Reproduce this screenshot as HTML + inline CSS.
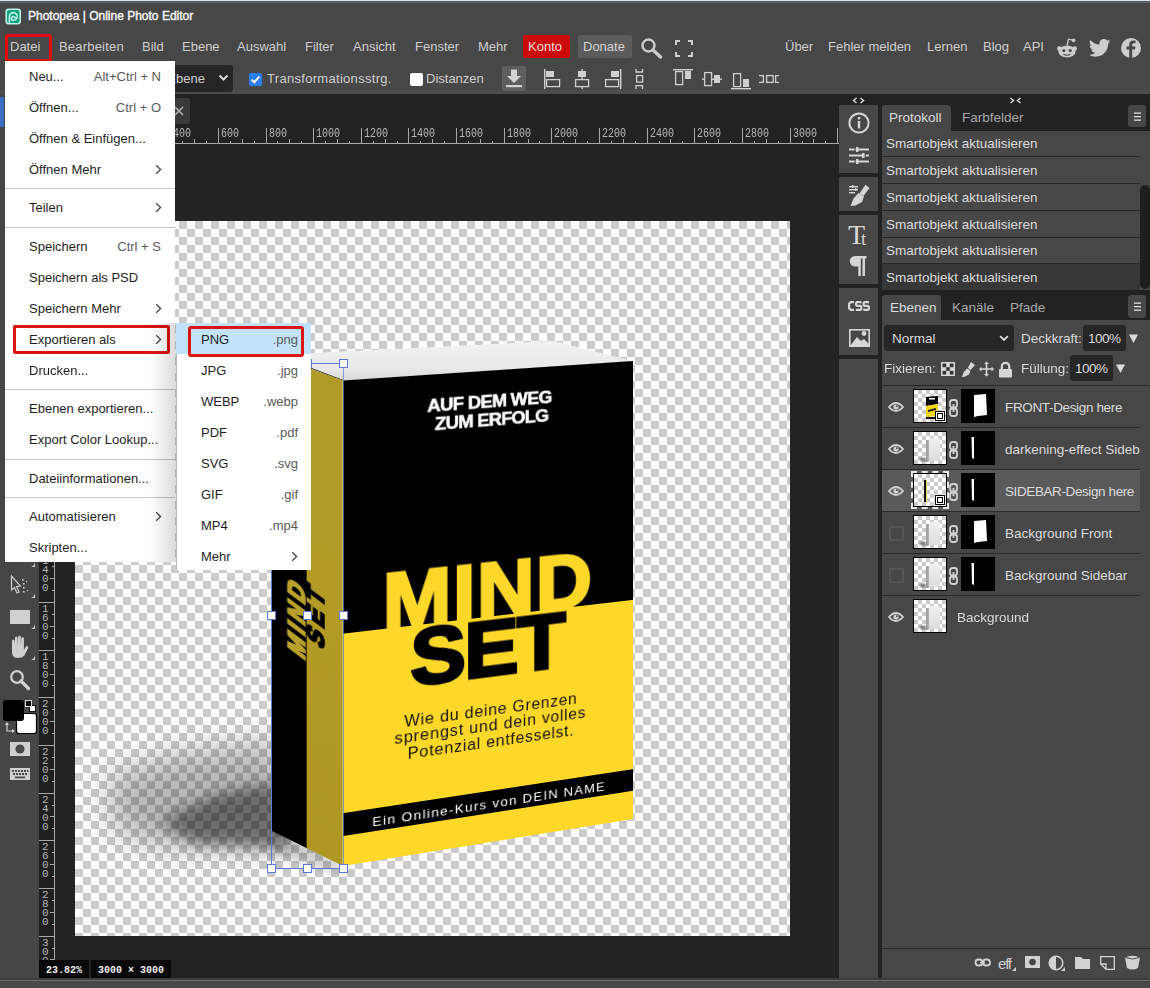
<!DOCTYPE html>
<html><head><meta charset="utf-8">
<style>
*{margin:0;padding:0;box-sizing:border-box}
html,body{width:1150px;height:988px;overflow:hidden;background:#474747;font-family:"Liberation Sans",sans-serif;font-size:13px;color:#cfcfcf}
.a{position:absolute}
.t{position:absolute;line-height:13px;white-space:nowrap}
.mono{font-family:"Liberation Mono",monospace}
.rl{font-size:10px;line-height:10px;color:#b8b8b8;transform:scaleY(1.2);transform-origin:0 100%}
.rv{font-size:11px;line-height:10px;color:#b4b4b4}
.mi{color:#1e1e1e}
.ms{color:#5a5a5a}
</style></head><body>
<!-- top border -->
<div class="a" style="left:0;top:0;width:1150px;height:1px;background:#dde2e8"></div>
<div class="a" style="left:0;top:1px;width:1150px;height:1px;background:#4d5156"></div>
<div class="a" style="left:0;top:2px;width:1150px;height:1px;background:#6b6f73"></div>
<div class="a" style="left:0;top:3px;width:1150px;height:1px;background:#43464a"></div>
<!-- dark work area -->
<div class="a" style="left:0;top:94px;width:1150px;height:884px;background:#222"></div>
<!-- bottom strip -->
<div class="a" style="left:0;top:978px;width:1150px;height:2px;background:#3c3c3c"></div>
<div class="a" style="left:0;top:980px;width:1150px;height:1px;background:#6e6e6e"></div>
<div class="a" style="left:0;top:981px;width:1150px;height:7px;background:#474747"></div>
<!-- left toolbar -->
<div class="a" style="left:0;top:94px;width:39px;height:884px;background:#464646"></div>
<div class="a" style="left:0;top:97px;width:4px;height:30px;background:#3a6fc4"></div>
<!-- canvas area -->
<div class="a" style="left:55px;top:144px;width:784px;height:834px;background:#232323"></div>
<div class="a" style="left:55px;top:125px;width:784px;height:19px;background:#222"></div>
<div class="a" style="left:39px;top:144px;width:16px;height:834px;background:#1f1f1f"></div>
<!-- doc tab -->
<div class="a" style="left:60px;top:98px;width:130px;height:26px;background:#3a3a3a;border-radius:3px"></div>
<svg class="a" style="left:173px;top:105px" width="12" height="12" viewBox="0 0 12 12"><path d="M2 2 L10 10 M10 2 L2 10" stroke="#b4b4b4" stroke-width="1.6"/></svg>
<!-- TITLE BAR -->
<svg class="a" style="left:5px;top:8px" width="17" height="17" viewBox="0 0 17 17">
<rect x="1.2" y="1.2" width="14" height="14.6" rx="2.5" fill="#16a07c" stroke="#b8f2ea" stroke-width="1.6"/>
<path d="M4.4 15.5 V8.5 A3.9 3.9 0 1 1 8.3 12.4 A1.9 1.9 0 1 1 10.2 10.5" fill="none" stroke="#b8f2ea" stroke-width="1.6"/>
</svg>
<div class="t" style="left:28px;top:10px;font-size:12px;color:#f0f0f0;-webkit-text-stroke:0.45px #f0f0f0">Photopea | Online Photo Editor</div>

<!-- MENU BAR -->
<div class="t" style="left:10px;top:40px">Datei</div>
<div class="a" style="left:5px;top:34px;width:47px;height:28px;border:3px solid #e00d0d;border-radius:3px"></div>
<div class="t" style="left:59px;top:40px;letter-spacing:0.2px">Bearbeiten</div>
<div class="t" style="left:142px;top:40px">Bild</div>
<div class="t" style="left:182px;top:40px">Ebene</div>
<div class="t" style="left:237px;top:40px">Auswahl</div>
<div class="t" style="left:305px;top:40px">Filter</div>
<div class="t" style="left:353px;top:40px">Ansicht</div>
<div class="t" style="left:415px;top:40px">Fenster</div>
<div class="t" style="left:478px;top:40px">Mehr</div>
<div class="a" style="left:523px;top:35px;width:47px;height:23px;background:#cc0a0a;border-radius:2px"></div>
<div class="t" style="left:528px;top:40px;color:#f6dede">Konto</div>
<div class="a" style="left:578px;top:35px;width:54px;height:23px;background:#5c5c5c;border-radius:2px"></div>
<div class="t" style="left:583px;top:40px;color:#d4d4d4">Donate</div>
<svg class="a" style="left:640px;top:37px" width="24" height="22" viewBox="0 0 24 22">
<circle cx="8.5" cy="8.5" r="6" fill="none" stroke="#cdcdcd" stroke-width="2.4"/>
<path d="M13 13 L20.5 20" stroke="#cdcdcd" stroke-width="3.4" stroke-linecap="round"/>
</svg>
<svg class="a" style="left:675px;top:40px" width="18" height="17" viewBox="0 0 18 17">
<path d="M1 5V1H5 M13 1H17V5 M17 12V16H13 M5 16H1V12" fill="none" stroke="#cdcdcd" stroke-width="2"/>
</svg>
<div class="t" style="left:785px;top:40px">Über</div>
<div class="t" style="left:828px;top:40px">Fehler melden</div>
<div class="t" style="left:927px;top:40px">Lernen</div>
<div class="t" style="left:983px;top:40px">Blog</div>
<div class="t" style="left:1023px;top:40px">API</div>
<!-- reddit -->
<svg class="a" style="left:1056px;top:37px" width="22" height="22" viewBox="0 0 22 22">
<ellipse cx="11" cy="14.5" rx="8.6" ry="6" fill="#cdcdcd"/>
<circle cx="3.2" cy="11.5" r="2.2" fill="#cdcdcd"/>
<circle cx="18.8" cy="11.5" r="2.2" fill="#cdcdcd"/>
<path d="M11 8.5 L12.5 2.2 L17 3.2" fill="none" stroke="#cdcdcd" stroke-width="1.3"/>
<circle cx="17.6" cy="3.4" r="1.8" fill="#cdcdcd"/>
<circle cx="7.8" cy="13.6" r="1.5" fill="#474747"/>
<circle cx="14.2" cy="13.6" r="1.5" fill="#474747"/>
<path d="M7.5 17.2 Q11 19.2 14.5 17.2" fill="none" stroke="#474747" stroke-width="1.1"/>
</svg>
<!-- twitter -->
<svg class="a" style="left:1089px;top:39px" width="22" height="18" viewBox="0 0 24 20">
<path fill="#cdcdcd" d="M23.6 2.4c-.9.4-1.8.6-2.8.8 1-.6 1.8-1.6 2.1-2.7-.9.6-2 1-3.1 1.2C18.9.7 17.6.1 16.2.1c-2.7 0-4.9 2.2-4.9 4.9 0 .4 0 .8.1 1.1C7.3 5.9 3.7 4 1.3 1 .9 1.7.6 2.6.6 3.5c0 1.7.9 3.2 2.2 4.1-.8 0-1.6-.2-2.2-.6v.1c0 2.4 1.7 4.4 3.9 4.8-.4.1-.8.2-1.3.2-.3 0-.6 0-.9-.1.6 2 2.4 3.4 4.6 3.4-1.7 1.3-3.8 2.1-6.1 2.1-.4 0-.8 0-1.2-.1 2.2 1.4 4.8 2.2 7.5 2.2 9.1 0 14-7.5 14-14v-.6c1-.7 1.8-1.6 2.5-2.6z"/>
</svg>
<!-- facebook -->
<svg class="a" style="left:1120px;top:37px" width="22" height="22" viewBox="0 0 22 22">
<circle cx="11" cy="11" r="10" fill="#cdcdcd"/>
<path d="M12.2 21.5 V12.6 H15 L15.4 9.6 H12.2 V7.8 C12.2 6.9 12.5 6.3 13.8 6.3 H15.5 V3.6 C15.2 3.6 14.2 3.5 13.2 3.5 C10.8 3.5 9.2 4.9 9.2 7.6 V9.6 H6.5 V12.6 H9.2 V21.5 Z" fill="#474747"/>
</svg>

<!-- TOOLBAR ROW -->
<div class="a" style="left:0;top:90px;width:1150px;height:4px;background:#4c4c4c"></div>
<div class="a" style="left:150px;top:65px;width:83px;height:27px;background:#262626;border-radius:3px"></div>
<div class="t" style="left:150px;top:72px;width:55px;text-align:right">Ebene</div>
<svg class="a" style="left:218px;top:74px" width="11" height="8" viewBox="0 0 11 8"><path d="M1.5 1.5 L5.5 5.5 L9.5 1.5" fill="none" stroke="#d8d8d8" stroke-width="2"/></svg>
<div class="a" style="left:249px;top:73px;width:13px;height:13px;background:#2a7ef2;border-radius:2px"></div>
<svg class="a" style="left:249px;top:73px" width="13" height="13" viewBox="0 0 13 13"><path d="M2.6 6.6 L5.2 9.2 L10.4 3.6" fill="none" stroke="#fff" stroke-width="2"/></svg>
<div class="t" style="left:267px;top:72px;letter-spacing:0.3px">Transformationsstrg.</div>
<div class="a" style="left:410px;top:73px;width:13px;height:13px;background:#fff;border-radius:2px"></div>
<div class="t" style="left:426px;top:72px">Distanzen</div>
<div class="a" style="left:502px;top:66px;width:24px;height:25px;background:#5e5e5e;border-radius:2px"></div>
<svg class="a" style="left:502px;top:66px" width="24" height="25" viewBox="0 0 24 25">
<path d="M9 3.5 H15 V10 H19 L12 17 L5 10 H9 Z" fill="#d2d2d2"/><rect x="4" y="19" width="16" height="2.2" fill="#d2d2d2"/>
</svg>


<!-- align icons -->
<svg class="a" style="left:530px;top:62px" width="260" height="32" viewBox="530 62 260 32">
<g fill="#d0d0d0">
<rect x="544" y="69" width="1.4" height="20"/><rect x="546" y="71" width="8" height="6"/>
<rect x="581.5" y="69" width="1.4" height="20"/><rect x="578" y="71" width="8" height="6"/>
<rect x="620" y="69" width="1.4" height="20"/><rect x="611" y="71" width="8" height="6"/>
<rect x="673" y="69" width="20" height="1.4"/><rect x="685" y="71" width="6" height="8"/>
<rect x="702" y="78.5" width="20" height="1.4"/><rect x="714" y="75" width="6" height="8"/>
<rect x="731" y="88" width="20" height="1.4"/><rect x="743" y="79" width="6" height="8"/>
</g>
<g fill="#474747" stroke="#d0d0d0" stroke-width="1.3">
<rect x="546.6" y="79.6" width="13" height="7"/>
<rect x="575.6" y="79.6" width="13" height="7"/>
<rect x="605.6" y="79.6" width="13" height="7"/>
<rect x="675.6" y="71.6" width="7" height="13"/>
<rect x="704.6" y="72.6" width="7" height="13"/>
<rect x="733.6" y="73.6" width="7" height="13"/>
</g>
<g fill="none" stroke="#d0d0d0" stroke-width="1.3">
<path d="M636 69 V72 H642.5 V69"/><rect x="636.6" y="75.6" width="6" height="6.5"/><path d="M636 89 V85.6 H642.5 V89"/>
<path d="M759 75.6 H763.4 V82.4 H759"/><rect x="766.6" y="75.6" width="6.5" height="6.8"/><path d="M779 75.6 H775.6 V82.4 H779"/>
</g>
</svg>
<!-- RULERS -->
<div class="a" style="left:55px;top:143px;width:784px;height:1px;background:#a8a8a8"></div>
<div class="a" style="left:63px;top:141px;width:1px;height:2px;background:#a8a8a8"></div>
<div class="a" style="left:75px;top:128px;width:1px;height:15px;background:#a8a8a8"></div>
<div class="t mono rl" style="left:78px;top:131px">0</div>
<div class="a" style="left:87px;top:141px;width:1px;height:2px;background:#a8a8a8"></div>
<div class="a" style="left:99px;top:139px;width:1px;height:4px;background:#a8a8a8"></div>
<div class="a" style="left:111px;top:141px;width:1px;height:2px;background:#a8a8a8"></div>
<div class="a" style="left:123px;top:128px;width:1px;height:15px;background:#a8a8a8"></div>
<div class="t mono rl" style="left:126px;top:131px">200</div>
<div class="a" style="left:135px;top:141px;width:1px;height:2px;background:#a8a8a8"></div>
<div class="a" style="left:146px;top:139px;width:1px;height:4px;background:#a8a8a8"></div>
<div class="a" style="left:158px;top:141px;width:1px;height:2px;background:#a8a8a8"></div>
<div class="a" style="left:170px;top:128px;width:1px;height:15px;background:#a8a8a8"></div>
<div class="t mono rl" style="left:173px;top:131px">400</div>
<div class="a" style="left:182px;top:141px;width:1px;height:2px;background:#a8a8a8"></div>
<div class="a" style="left:194px;top:139px;width:1px;height:4px;background:#a8a8a8"></div>
<div class="a" style="left:206px;top:141px;width:1px;height:2px;background:#a8a8a8"></div>
<div class="a" style="left:218px;top:128px;width:1px;height:15px;background:#a8a8a8"></div>
<div class="t mono rl" style="left:221px;top:131px">600</div>
<div class="a" style="left:230px;top:141px;width:1px;height:2px;background:#a8a8a8"></div>
<div class="a" style="left:242px;top:139px;width:1px;height:4px;background:#a8a8a8"></div>
<div class="a" style="left:254px;top:141px;width:1px;height:2px;background:#a8a8a8"></div>
<div class="a" style="left:266px;top:128px;width:1px;height:15px;background:#a8a8a8"></div>
<div class="t mono rl" style="left:269px;top:131px">800</div>
<div class="a" style="left:277px;top:141px;width:1px;height:2px;background:#a8a8a8"></div>
<div class="a" style="left:289px;top:139px;width:1px;height:4px;background:#a8a8a8"></div>
<div class="a" style="left:301px;top:141px;width:1px;height:2px;background:#a8a8a8"></div>
<div class="a" style="left:313px;top:128px;width:1px;height:15px;background:#a8a8a8"></div>
<div class="t mono rl" style="left:316px;top:131px">1000</div>
<div class="a" style="left:325px;top:141px;width:1px;height:2px;background:#a8a8a8"></div>
<div class="a" style="left:337px;top:139px;width:1px;height:4px;background:#a8a8a8"></div>
<div class="a" style="left:349px;top:141px;width:1px;height:2px;background:#a8a8a8"></div>
<div class="a" style="left:361px;top:128px;width:1px;height:15px;background:#a8a8a8"></div>
<div class="t mono rl" style="left:364px;top:131px">1200</div>
<div class="a" style="left:373px;top:141px;width:1px;height:2px;background:#a8a8a8"></div>
<div class="a" style="left:385px;top:139px;width:1px;height:4px;background:#a8a8a8"></div>
<div class="a" style="left:397px;top:141px;width:1px;height:2px;background:#a8a8a8"></div>
<div class="a" style="left:408px;top:128px;width:1px;height:15px;background:#a8a8a8"></div>
<div class="t mono rl" style="left:411px;top:131px">1400</div>
<div class="a" style="left:420px;top:141px;width:1px;height:2px;background:#a8a8a8"></div>
<div class="a" style="left:432px;top:139px;width:1px;height:4px;background:#a8a8a8"></div>
<div class="a" style="left:444px;top:141px;width:1px;height:2px;background:#a8a8a8"></div>
<div class="a" style="left:456px;top:128px;width:1px;height:15px;background:#a8a8a8"></div>
<div class="t mono rl" style="left:459px;top:131px">1600</div>
<div class="a" style="left:468px;top:141px;width:1px;height:2px;background:#a8a8a8"></div>
<div class="a" style="left:480px;top:139px;width:1px;height:4px;background:#a8a8a8"></div>
<div class="a" style="left:492px;top:141px;width:1px;height:2px;background:#a8a8a8"></div>
<div class="a" style="left:504px;top:128px;width:1px;height:15px;background:#a8a8a8"></div>
<div class="t mono rl" style="left:507px;top:131px">1800</div>
<div class="a" style="left:516px;top:141px;width:1px;height:2px;background:#a8a8a8"></div>
<div class="a" style="left:528px;top:139px;width:1px;height:4px;background:#a8a8a8"></div>
<div class="a" style="left:539px;top:141px;width:1px;height:2px;background:#a8a8a8"></div>
<div class="a" style="left:551px;top:128px;width:1px;height:15px;background:#a8a8a8"></div>
<div class="t mono rl" style="left:554px;top:131px">2000</div>
<div class="a" style="left:563px;top:141px;width:1px;height:2px;background:#a8a8a8"></div>
<div class="a" style="left:575px;top:139px;width:1px;height:4px;background:#a8a8a8"></div>
<div class="a" style="left:587px;top:141px;width:1px;height:2px;background:#a8a8a8"></div>
<div class="a" style="left:599px;top:128px;width:1px;height:15px;background:#a8a8a8"></div>
<div class="t mono rl" style="left:602px;top:131px">2200</div>
<div class="a" style="left:611px;top:141px;width:1px;height:2px;background:#a8a8a8"></div>
<div class="a" style="left:623px;top:139px;width:1px;height:4px;background:#a8a8a8"></div>
<div class="a" style="left:635px;top:141px;width:1px;height:2px;background:#a8a8a8"></div>
<div class="a" style="left:647px;top:128px;width:1px;height:15px;background:#a8a8a8"></div>
<div class="t mono rl" style="left:650px;top:131px">2400</div>
<div class="a" style="left:659px;top:141px;width:1px;height:2px;background:#a8a8a8"></div>
<div class="a" style="left:670px;top:139px;width:1px;height:4px;background:#a8a8a8"></div>
<div class="a" style="left:682px;top:141px;width:1px;height:2px;background:#a8a8a8"></div>
<div class="a" style="left:694px;top:128px;width:1px;height:15px;background:#a8a8a8"></div>
<div class="t mono rl" style="left:697px;top:131px">2600</div>
<div class="a" style="left:706px;top:141px;width:1px;height:2px;background:#a8a8a8"></div>
<div class="a" style="left:718px;top:139px;width:1px;height:4px;background:#a8a8a8"></div>
<div class="a" style="left:730px;top:141px;width:1px;height:2px;background:#a8a8a8"></div>
<div class="a" style="left:742px;top:128px;width:1px;height:15px;background:#a8a8a8"></div>
<div class="t mono rl" style="left:745px;top:131px">2800</div>
<div class="a" style="left:754px;top:141px;width:1px;height:2px;background:#a8a8a8"></div>
<div class="a" style="left:766px;top:139px;width:1px;height:4px;background:#a8a8a8"></div>
<div class="a" style="left:778px;top:141px;width:1px;height:2px;background:#a8a8a8"></div>
<div class="a" style="left:790px;top:128px;width:1px;height:15px;background:#a8a8a8"></div>
<div class="t mono rl" style="left:793px;top:131px">3000</div>
<div class="a" style="left:802px;top:141px;width:1px;height:2px;background:#a8a8a8"></div>
<div class="a" style="left:813px;top:139px;width:1px;height:4px;background:#a8a8a8"></div>
<div class="a" style="left:825px;top:141px;width:1px;height:2px;background:#a8a8a8"></div>
<div class="a" style="left:837px;top:128px;width:1px;height:15px;background:#a8a8a8"></div>
<div class="t mono rl" style="left:840px;top:131px">3200</div>
<div class="a" style="left:54px;top:144px;width:1px;height:834px;background:#a8a8a8"></div>
<div class="a" style="left:52px;top:209px;width:2px;height:1px;background:#a8a8a8"></div>
<div class="a" style="left:39px;top:221px;width:15px;height:1px;background:#a8a8a8"></div>
<div class="t mono rv" style="left:42px;top:223px">0</div>
<div class="a" style="left:52px;top:233px;width:2px;height:1px;background:#a8a8a8"></div>
<div class="a" style="left:50px;top:245px;width:4px;height:1px;background:#a8a8a8"></div>
<div class="a" style="left:52px;top:257px;width:2px;height:1px;background:#a8a8a8"></div>
<div class="a" style="left:39px;top:269px;width:15px;height:1px;background:#a8a8a8"></div>
<div class="t mono rv" style="left:42px;top:271px">2</div>
<div class="t mono rv" style="left:42px;top:280px">0</div>
<div class="t mono rv" style="left:42px;top:289px">0</div>
<div class="a" style="left:52px;top:281px;width:2px;height:1px;background:#a8a8a8"></div>
<div class="a" style="left:50px;top:292px;width:4px;height:1px;background:#a8a8a8"></div>
<div class="a" style="left:52px;top:304px;width:2px;height:1px;background:#a8a8a8"></div>
<div class="a" style="left:39px;top:316px;width:15px;height:1px;background:#a8a8a8"></div>
<div class="t mono rv" style="left:42px;top:318px">4</div>
<div class="t mono rv" style="left:42px;top:327px">0</div>
<div class="t mono rv" style="left:42px;top:336px">0</div>
<div class="a" style="left:52px;top:328px;width:2px;height:1px;background:#a8a8a8"></div>
<div class="a" style="left:50px;top:340px;width:4px;height:1px;background:#a8a8a8"></div>
<div class="a" style="left:52px;top:352px;width:2px;height:1px;background:#a8a8a8"></div>
<div class="a" style="left:39px;top:364px;width:15px;height:1px;background:#a8a8a8"></div>
<div class="t mono rv" style="left:42px;top:366px">6</div>
<div class="t mono rv" style="left:42px;top:375px">0</div>
<div class="t mono rv" style="left:42px;top:384px">0</div>
<div class="a" style="left:52px;top:376px;width:2px;height:1px;background:#a8a8a8"></div>
<div class="a" style="left:50px;top:388px;width:4px;height:1px;background:#a8a8a8"></div>
<div class="a" style="left:52px;top:400px;width:2px;height:1px;background:#a8a8a8"></div>
<div class="a" style="left:39px;top:412px;width:15px;height:1px;background:#a8a8a8"></div>
<div class="t mono rv" style="left:42px;top:414px">8</div>
<div class="t mono rv" style="left:42px;top:423px">0</div>
<div class="t mono rv" style="left:42px;top:432px">0</div>
<div class="a" style="left:52px;top:423px;width:2px;height:1px;background:#a8a8a8"></div>
<div class="a" style="left:50px;top:435px;width:4px;height:1px;background:#a8a8a8"></div>
<div class="a" style="left:52px;top:447px;width:2px;height:1px;background:#a8a8a8"></div>
<div class="a" style="left:39px;top:459px;width:15px;height:1px;background:#a8a8a8"></div>
<div class="t mono rv" style="left:42px;top:461px">1</div>
<div class="t mono rv" style="left:42px;top:470px">0</div>
<div class="t mono rv" style="left:42px;top:479px">0</div>
<div class="t mono rv" style="left:42px;top:488px">0</div>
<div class="a" style="left:52px;top:471px;width:2px;height:1px;background:#a8a8a8"></div>
<div class="a" style="left:50px;top:483px;width:4px;height:1px;background:#a8a8a8"></div>
<div class="a" style="left:52px;top:495px;width:2px;height:1px;background:#a8a8a8"></div>
<div class="a" style="left:39px;top:507px;width:15px;height:1px;background:#a8a8a8"></div>
<div class="t mono rv" style="left:42px;top:509px">1</div>
<div class="t mono rv" style="left:42px;top:518px">2</div>
<div class="t mono rv" style="left:42px;top:527px">0</div>
<div class="t mono rv" style="left:42px;top:536px">0</div>
<div class="a" style="left:52px;top:519px;width:2px;height:1px;background:#a8a8a8"></div>
<div class="a" style="left:50px;top:531px;width:4px;height:1px;background:#a8a8a8"></div>
<div class="a" style="left:52px;top:543px;width:2px;height:1px;background:#a8a8a8"></div>
<div class="a" style="left:39px;top:554px;width:15px;height:1px;background:#a8a8a8"></div>
<div class="t mono rv" style="left:42px;top:556px">1</div>
<div class="t mono rv" style="left:42px;top:565px">4</div>
<div class="t mono rv" style="left:42px;top:574px">0</div>
<div class="t mono rv" style="left:42px;top:583px">0</div>
<div class="a" style="left:52px;top:566px;width:2px;height:1px;background:#a8a8a8"></div>
<div class="a" style="left:50px;top:578px;width:4px;height:1px;background:#a8a8a8"></div>
<div class="a" style="left:52px;top:590px;width:2px;height:1px;background:#a8a8a8"></div>
<div class="a" style="left:39px;top:602px;width:15px;height:1px;background:#a8a8a8"></div>
<div class="t mono rv" style="left:42px;top:604px">1</div>
<div class="t mono rv" style="left:42px;top:613px">6</div>
<div class="t mono rv" style="left:42px;top:622px">0</div>
<div class="t mono rv" style="left:42px;top:631px">0</div>
<div class="a" style="left:52px;top:614px;width:2px;height:1px;background:#a8a8a8"></div>
<div class="a" style="left:50px;top:626px;width:4px;height:1px;background:#a8a8a8"></div>
<div class="a" style="left:52px;top:638px;width:2px;height:1px;background:#a8a8a8"></div>
<div class="a" style="left:39px;top:650px;width:15px;height:1px;background:#a8a8a8"></div>
<div class="t mono rv" style="left:42px;top:652px">1</div>
<div class="t mono rv" style="left:42px;top:661px">8</div>
<div class="t mono rv" style="left:42px;top:670px">0</div>
<div class="t mono rv" style="left:42px;top:679px">0</div>
<div class="a" style="left:52px;top:662px;width:2px;height:1px;background:#a8a8a8"></div>
<div class="a" style="left:50px;top:674px;width:4px;height:1px;background:#a8a8a8"></div>
<div class="a" style="left:52px;top:685px;width:2px;height:1px;background:#a8a8a8"></div>
<div class="a" style="left:39px;top:697px;width:15px;height:1px;background:#a8a8a8"></div>
<div class="t mono rv" style="left:42px;top:699px">2</div>
<div class="t mono rv" style="left:42px;top:708px">0</div>
<div class="t mono rv" style="left:42px;top:717px">0</div>
<div class="t mono rv" style="left:42px;top:726px">0</div>
<div class="a" style="left:52px;top:709px;width:2px;height:1px;background:#a8a8a8"></div>
<div class="a" style="left:50px;top:721px;width:4px;height:1px;background:#a8a8a8"></div>
<div class="a" style="left:52px;top:733px;width:2px;height:1px;background:#a8a8a8"></div>
<div class="a" style="left:39px;top:745px;width:15px;height:1px;background:#a8a8a8"></div>
<div class="t mono rv" style="left:42px;top:747px">2</div>
<div class="t mono rv" style="left:42px;top:756px">2</div>
<div class="t mono rv" style="left:42px;top:765px">0</div>
<div class="t mono rv" style="left:42px;top:774px">0</div>
<div class="a" style="left:52px;top:757px;width:2px;height:1px;background:#a8a8a8"></div>
<div class="a" style="left:50px;top:769px;width:4px;height:1px;background:#a8a8a8"></div>
<div class="a" style="left:52px;top:781px;width:2px;height:1px;background:#a8a8a8"></div>
<div class="a" style="left:39px;top:793px;width:15px;height:1px;background:#a8a8a8"></div>
<div class="t mono rv" style="left:42px;top:795px">2</div>
<div class="t mono rv" style="left:42px;top:804px">4</div>
<div class="t mono rv" style="left:42px;top:813px">0</div>
<div class="t mono rv" style="left:42px;top:822px">0</div>
<div class="a" style="left:52px;top:805px;width:2px;height:1px;background:#a8a8a8"></div>
<div class="a" style="left:50px;top:816px;width:4px;height:1px;background:#a8a8a8"></div>
<div class="a" style="left:52px;top:828px;width:2px;height:1px;background:#a8a8a8"></div>
<div class="a" style="left:39px;top:840px;width:15px;height:1px;background:#a8a8a8"></div>
<div class="t mono rv" style="left:42px;top:842px">2</div>
<div class="t mono rv" style="left:42px;top:851px">6</div>
<div class="t mono rv" style="left:42px;top:860px">0</div>
<div class="t mono rv" style="left:42px;top:869px">0</div>
<div class="a" style="left:52px;top:852px;width:2px;height:1px;background:#a8a8a8"></div>
<div class="a" style="left:50px;top:864px;width:4px;height:1px;background:#a8a8a8"></div>
<div class="a" style="left:52px;top:876px;width:2px;height:1px;background:#a8a8a8"></div>
<div class="a" style="left:39px;top:888px;width:15px;height:1px;background:#a8a8a8"></div>
<div class="t mono rv" style="left:42px;top:890px">2</div>
<div class="t mono rv" style="left:42px;top:899px">8</div>
<div class="t mono rv" style="left:42px;top:908px">0</div>
<div class="t mono rv" style="left:42px;top:917px">0</div>
<div class="a" style="left:52px;top:900px;width:2px;height:1px;background:#a8a8a8"></div>
<div class="a" style="left:50px;top:912px;width:4px;height:1px;background:#a8a8a8"></div>
<div class="a" style="left:52px;top:924px;width:2px;height:1px;background:#a8a8a8"></div>
<div class="a" style="left:39px;top:936px;width:15px;height:1px;background:#a8a8a8"></div>
<div class="t mono rv" style="left:42px;top:938px">3</div>
<div class="t mono rv" style="left:42px;top:947px">0</div>
<div class="t mono rv" style="left:42px;top:956px">0</div>
<div class="t mono rv" style="left:42px;top:965px">0</div>
<div class="a" style="left:52px;top:948px;width:2px;height:1px;background:#a8a8a8"></div>
<div class="a" style="left:50px;top:959px;width:4px;height:1px;background:#a8a8a8"></div>
<div class="a" style="left:52px;top:971px;width:2px;height:1px;background:#a8a8a8"></div>
<!-- canvas -->
<div class="a" style="left:75px;top:221px;width:715px;height:715px;background:conic-gradient(#ccc 25%,#fff 0 50%,#ccc 0 75%,#fff 0);background-size:16px 16px"></div>
<!-- BOOK -->
<svg class="a" style="left:0;top:0" width="1150" height="988"><defs><filter id="sb" x="-50%" y="-50%" width="200%" height="200%"><feGaussianBlur stdDeviation="16"/></filter><filter id="sb2" x="-50%" y="-50%" width="200%" height="200%"><feGaussianBlur stdDeviation="7"/></filter></defs><path d="M285 738 L180 752 L108 775 L112 830 L160 848 L285 850 Z" fill="#000" opacity="0.27" filter="url(#sb)"/><path d="M285 780 L215 795 L160 822 L195 844 L285 848 Z" fill="#000" opacity="0.42" filter="url(#sb2)"/><path d="M272 828 L343 864 L343 874 L272 850 Z" fill="#000" opacity="0.25" filter="url(#sb2)"/></svg>
<svg class="a" style="left:0;top:0" width="1150" height="988"><defs><linearGradient id="tg" x1="0" y1="0" x2="0" y2="1"><stop offset="0" stop-color="#f2f2f2"/><stop offset="0.7" stop-color="#e8e8e8"/><stop offset="1" stop-color="#d8d8d8"/></linearGradient></defs><path d="M272 355 L553 341 L633 361 L343 380.4 Z" fill="url(#tg)"/><path d="M300 364 L343 380.4" stroke="#333" stroke-width="1"/></svg>
<div class="a" style="left:0;top:0;width:71px;height:486px;transform-origin:0 0;transform:matrix3d(0.90449451,0.25182727,0,-0.00027844165,0,0.97942387,0,0,0,0,1,0,272,355,0,1);overflow:hidden;background:linear-gradient(180deg,#b09a2a 0%,#b39b26 40%,#b09724 100%)"><div class="a" style="left:0;top:0;width:35px;height:486px;background:#000"></div><div class="a" style="left:70px;top:0;width:1px;height:486px;background:#c8b860"></div><div class="a" style="left:0;top:0;width:300px;height:40px;transform-origin:0 0;transform:translate(13px,299px) rotate(-90deg)"><div class="t" style="left:0;top:0;font-size:24px;line-height:24px;font-weight:bold;color:#b9a02c;letter-spacing:4px;-webkit-text-stroke:2.2px #b9a02c;transform:skewX(-18deg);transform-origin:0 100%">MIND</div></div><div class="a" style="left:0;top:0;width:300px;height:40px;transform-origin:0 0;transform:translate(32px,280px) rotate(-90deg)"><div class="t" style="left:0;top:0;font-size:24px;line-height:24px;font-weight:bold;color:#000;letter-spacing:5px;-webkit-text-stroke:2px #000;transform:skewX(-18deg);transform-origin:0 100%">SET</div></div></div>
<div class="a" style="left:0;top:0;width:290px;height:487px;transform-origin:0 0;transform:matrix3d(1.1315374,0.0081192591,0,0.00020780003,0,0.99712526,0,0,0,0,1,0,343,380.4,0,1);overflow:hidden;background:#000"><div class="a" style="left:0;top:254px;width:290px;height:233px;background:#fdd829"></div><div class="a" style="left:0;top:434px;width:290px;height:23px;background:#000"></div><div class="t" style="left:-157px;width:600px;text-align:center;top:22.5px;font-size:18.3px;line-height:18.3px;font-weight:bold;color:#fff;letter-spacing:-0.7px;-webkit-text-stroke:0.5px #fff">AUF DEM WEG</div>
<div class="t" style="left:-155px;width:600px;text-align:center;top:41.5px;font-size:18.3px;line-height:18.3px;font-weight:bold;color:#fff;letter-spacing:-0.75px;-webkit-text-stroke:0.5px #fff">ZUM ERFOLG</div>
<div class="t" style="left:-157px;width:600px;text-align:center;top:187.3px;font-size:80px;line-height:80px;font-weight:bold;color:#fdd829;letter-spacing:1.5px;-webkit-text-stroke:3px #fdd829">MIND</div>
<div class="t" style="left:-159px;width:600px;text-align:center;top:246.1px;font-size:82px;line-height:82px;font-weight:bold;color:#000;letter-spacing:-2px;-webkit-text-stroke:3px #000">SET</div>
<div class="t" style="left:-155px;width:600px;text-align:center;top:342.5px;font-size:16px;line-height:16px;font-weight:normal;color:#111;letter-spacing:0.7px;">Wie du deine Grenzen</div>
<div class="t" style="left:-155px;width:600px;text-align:center;top:359.0px;font-size:16px;line-height:16px;font-weight:normal;color:#111;letter-spacing:0.8px;">sprengst und dein volles</div>
<div class="t" style="left:-155px;width:600px;text-align:center;top:375.5px;font-size:16px;line-height:16px;font-weight:normal;color:#111;letter-spacing:0.7px;">Potenzial entfesselst.</div>
<div class="t" style="left:-155.5px;width:600px;text-align:center;top:440.7px;font-size:13.4px;line-height:13.4px;font-weight:normal;color:#fff;letter-spacing:1.25px;">Ein Online-Kurs von DEIN NAME</div>
</div>
<div class="a" style="left:271px;top:363px;width:1px;height:505px;background:#5b7ad6"></div>
<div class="a" style="left:343px;top:363px;width:1px;height:505px;background:#5b7ad6;opacity:0.7"></div>
<div class="a" style="left:271px;top:363px;width:72px;height:1px;background:#5b7ad6"></div>
<div class="a" style="left:271px;top:868px;width:72px;height:1px;background:#5b7ad6"></div>
<div class="a" style="left:267px;top:359px;width:9px;height:9px;background:#fff;border:1px solid #5b7ad6"></div>
<div class="a" style="left:303px;top:359px;width:9px;height:9px;background:#fff;border:1px solid #5b7ad6"></div>
<div class="a" style="left:339px;top:359px;width:9px;height:9px;background:#fff;border:1px solid #5b7ad6"></div>
<div class="a" style="left:267px;top:611px;width:9px;height:9px;background:#fff;border:1px solid #5b7ad6"></div>
<div class="a" style="left:303px;top:611px;width:9px;height:9px;background:#fff;border:1px solid #5b7ad6"></div>
<div class="a" style="left:339px;top:611px;width:9px;height:9px;background:#fff;border:1px solid #5b7ad6"></div>
<div class="a" style="left:267px;top:864px;width:9px;height:9px;background:#fff;border:1px solid #5b7ad6"></div>
<div class="a" style="left:303px;top:864px;width:9px;height:9px;background:#fff;border:1px solid #5b7ad6"></div>
<div class="a" style="left:339px;top:864px;width:9px;height:9px;background:#fff;border:1px solid #5b7ad6"></div>
<!-- LEFT TOOLBAR ICONS -->
<svg class="a" style="left:0;top:560px" width="39" height="240" viewBox="0 560 39 240">
<g fill="#d0d0d0">
<!-- corner marks -->
<path d="M35 562 Q34 567 30 567 L35 567 Z"/>
<path d="M35 593 Q34 598 30 598 L35 598 Z"/>
<path d="M35 624 Q34 629 30 629 L35 629 Z"/>
<path d="M35 655 Q34 660 30 660 L35 660 Z"/>
<!-- select arrow with dotted -->
<path d="M11.5 576 L11.5 590 L14.5 587.5 L17 593 L19 592 L16.6 586.5 L20.5 586 Z" fill="none" stroke="#d0d0d0" stroke-width="1.2"/>
<rect x="22" y="579" width="1.6" height="1.6"/><rect x="23" y="583" width="1.6" height="1.6"/><rect x="23" y="587" width="1.6" height="1.6"/><rect x="23" y="591" width="1.6" height="1.6"/><rect x="26" y="581" width="1.2" height="1.2"/><rect x="27" y="590" width="1.2" height="1.2"/>
<!-- rect -->
<rect x="10" y="610" width="20" height="14"/>
<!-- hand -->
<path d="M12 648 L12 641 Q12 639.5 13.3 639.5 Q14.6 639.5 14.6 641 L14.6 646 L15 638 Q15 636.5 16.3 636.5 Q17.6 636.5 17.6 638 L17.8 646 L18.2 637 Q18.2 635.5 19.5 635.5 Q20.8 635.5 20.8 637 L20.8 646 L21.3 638.5 Q21.3 637 22.6 637 Q23.9 637 23.9 638.5 L23.9 650 L25.5 647 Q26.5 645.5 27.8 646.3 Q28.8 647 28 648.5 L24 656 Q22 658 18 658 Q12 658 12 652 Z"/>
<!-- magnifier -->
<circle cx="17" cy="677" r="5.8" fill="none" stroke="#d0d0d0" stroke-width="2.2"/>
<path d="M21 681 L28.5 688.5" stroke="#d0d0d0" stroke-width="3.2" stroke-linecap="round"/>
<!-- mask -->
<rect x="10" y="742" width="20" height="14"/>
<!-- keyboard -->
<rect x="10" y="768" width="20" height="12"/>
</g>
<circle cx="20" cy="749" r="4.6" fill="#4a4a4a"/>
<g fill="#4a4a4a">
<rect x="12" y="770" width="2" height="2"/><rect x="15" y="770" width="2" height="2"/><rect x="18" y="770" width="2" height="2"/><rect x="21" y="770" width="2" height="2"/><rect x="24" y="770" width="2" height="2"/><rect x="27" y="770" width="1.5" height="2"/>
<rect x="13" y="773" width="2" height="2"/><rect x="16" y="773" width="2" height="2"/><rect x="19" y="773" width="2" height="2"/><rect x="22" y="773" width="2" height="2"/><rect x="25" y="773" width="2" height="2"/>
<rect x="15" y="776.5" width="10" height="1.8"/>
</g>
<!-- swap arrows -->
<path d="M7 723 L7 731 L14 731" fill="none" stroke="#cfcfcf" stroke-width="1.2"/>
<path d="M5 725 L7 722 L9 725 Z M12 729 L15 731 L12 733 Z" fill="#cfcfcf"/>
<!-- small default colors -->
<rect x="29.5" y="705.5" width="6" height="6" fill="#fff" stroke="#111" stroke-width="1"/>
<rect x="25.5" y="700.5" width="6" height="6" fill="#000" stroke="#ddd" stroke-width="1"/>
<!-- bg color -->
<rect x="16.5" y="713.5" width="20" height="20" rx="2.5" fill="#fff" stroke="#000" stroke-width="1.2"/>
<!-- fg color -->
<rect x="3" y="700" width="21" height="21" rx="3" fill="#000"/>
</svg>
<!-- column panel -->
<svg class="a" style="left:852px;top:97px" width="13" height="7" viewBox="0 0 13 7"><path d="M4.5 1 L1.5 3.5 L4.5 6 M8.5 1 L11.5 3.5 L8.5 6" fill="none" stroke="#d8d8d8" stroke-width="1.5"/></svg>
<svg class="a" style="left:1009px;top:97px" width="13" height="7" viewBox="0 0 13 7"><path d="M1.5 1 L4.5 3.5 L1.5 6 M11.5 1 L8.5 3.5 L11.5 6" fill="none" stroke="#d8d8d8" stroke-width="1.5"/></svg>
<div class="a" style="left:839px;top:105px;width:39px;height:68px;background:#474747"></div>
<div class="a" style="left:839px;top:177px;width:39px;height:34px;background:#474747"></div>
<div class="a" style="left:839px;top:215px;width:39px;height:69px;background:#474747"></div>
<div class="a" style="left:839px;top:288px;width:39px;height:67px;background:#474747"></div>
<div class="a" style="left:839px;top:359px;width:39px;height:619px;background:#474747"></div>
<!-- info icon -->
<svg class="a" style="left:847px;top:111px" width="24" height="24" viewBox="0 0 24 24">
<circle cx="12" cy="12" r="9.6" fill="none" stroke="#d6d6d6" stroke-width="2"/>
<rect x="10.8" y="10" width="2.4" height="7.5" fill="#d6d6d6"/><rect x="10.8" y="6" width="2.4" height="2.4" fill="#d6d6d6"/>
</svg>
<!-- sliders -->
<svg class="a" style="left:849px;top:146px" width="21" height="18" viewBox="0 0 21 18">
<g fill="#d6d6d6"><rect x="0" y="2.5" width="20" height="2"/><rect x="0" y="8.5" width="20" height="2"/><rect x="0" y="14.5" width="20" height="2"/>
<rect x="7" y="1" width="2.5" height="5"/><rect x="13" y="7" width="2.5" height="5"/><rect x="7" y="13" width="2.5" height="5"/></g>
<g fill="#474747"><rect x="5.5" y="2.5" width="1.2" height="2"/><rect x="15.7" y="8.5" width="1.2" height="2"/><rect x="5.5" y="14.5" width="1.2" height="2"/></g>
</svg>
<!-- brush -->
<svg class="a" style="left:848px;top:184px" width="23" height="23" viewBox="848 184 23 23">
<g fill="#d6d6d6">
<rect x="849" y="186" width="9" height="1.4"/><rect x="849" y="189" width="9" height="1.4"/><rect x="849" y="192" width="6" height="1.4"/>
<rect x="852" y="185" width="1.4" height="3"/><rect x="855" y="188" width="1.4" height="3"/>
<path d="M865.5 184.8 L869.5 188 L863.5 196 L859.5 193.5 Z"/>
<path d="M858.5 193 L864 196.5 L862 202 L855.5 205.5 L850.5 206 L853.5 198.5 Z"/>
</g></svg>
<!-- Tt -->
<div class="t" style="left:848px;top:222px;font-family:'Liberation Serif',serif;font-size:28px;line-height:26px;color:#d6d6d6">T</div>
<div class="t" style="left:861px;top:229px;font-family:'Liberation Serif',serif;font-size:19px;line-height:19px;color:#d6d6d6">t</div>
<!-- pilcrow -->
<svg class="a" style="left:848px;top:255px" width="20" height="22" viewBox="0 0 20 22">
<path d="M7 1 H18.5 V3.5 H17 V21 H14.5 V3.5 H12.8 V21 H10.3 V11.5 H7 A5.25 5.25 0 0 1 7 1 Z" fill="#d6d6d6"/>
</svg>
<!-- CSS -->
<svg class="a" style="left:848px;top:300px" width="22" height="12" viewBox="0 0 22 12">
<g fill="none" stroke="#d6d6d6" stroke-width="2.2">
<path d="M6 2.1 H2.6 L1.1 3.6 V8.4 L2.6 9.9 H6"/>
<path d="M13.5 2.1 H9 L8.1 3 V5 L9 5.9 H12.4 L13.3 6.8 V9 L12.4 9.9 H7.8"/>
<path d="M21 2.1 H16.5 L15.6 3 V5 L16.5 5.9 H19.9 L20.8 6.8 V9 L19.9 9.9 H15.3"/>
</g></svg>
<!-- image icon -->
<svg class="a" style="left:849px;top:329px" width="21" height="18" viewBox="0 0 21 18">
<rect x="0.8" y="0.8" width="19.4" height="16.4" fill="none" stroke="#d6d6d6" stroke-width="1.6"/>
<path d="M1 17 L8 8 L12 12 L15 10 L20 15 V17 Z" fill="#d6d6d6"/><circle cx="15" cy="4.5" r="2.4" fill="#d6d6d6"/>
</svg>

<!-- PROTOKOLL PANEL -->
<div class="a" style="left:882px;top:105px;width:69px;height:27px;background:#474747;border-radius:3px 3px 0 0"></div>
<div class="t" style="left:889px;top:111px;font-size:13.5px;color:#dcdcdc">Protokoll</div>
<div class="t" style="left:962px;top:111px;font-size:13.5px;color:#a9a9a9">Farbfelder</div>
<div class="a" style="left:1128px;top:105px;width:18px;height:22px;background:#474747;border-radius:3px"></div>
<svg class="a" style="left:1128px;top:105px" width="18" height="22" viewBox="0 0 18 22"><g fill="#e0e0e0"><rect x="6" y="7.5" width="7" height="1.3"/><rect x="6" y="11" width="7" height="1.3"/><rect x="6" y="14.5" width="7" height="1.3"/></g></svg>
<div class="a" style="left:882px;top:131px;width:268px;height:159px;background:#474747"></div>
<div class="a" style="left:882px;top:264px;width:258px;height:26px;background:#373737"></div>
<div class="a" style="left:882px;top:156px;width:258px;height:1px;background:#282828"></div>
<div class="a" style="left:882px;top:183px;width:258px;height:1px;background:#282828"></div>
<div class="a" style="left:882px;top:210px;width:258px;height:1px;background:#282828"></div>
<div class="a" style="left:882px;top:237px;width:258px;height:1px;background:#282828"></div>
<div class="a" style="left:882px;top:263px;width:258px;height:1px;background:#282828"></div>
<div class="a" style="left:1140px;top:185px;width:10px;height:104px;background:#1e1e1e;border-radius:5px"></div>
<div class="t" style="left:886px;top:137px;font-size:13.5px;color:#dcdcdc">Smartobjekt aktualisieren</div>
<div class="t" style="left:886px;top:164px;font-size:13.5px;color:#dcdcdc">Smartobjekt aktualisieren</div>
<div class="t" style="left:886px;top:191px;font-size:13.5px;color:#dcdcdc">Smartobjekt aktualisieren</div>
<div class="t" style="left:886px;top:218px;font-size:13.5px;color:#dcdcdc">Smartobjekt aktualisieren</div>
<div class="t" style="left:886px;top:244px;font-size:13.5px;color:#dcdcdc">Smartobjekt aktualisieren</div>
<div class="t" style="left:886px;top:271px;font-size:13.5px;color:#dcdcdc">Smartobjekt aktualisieren</div>

<!-- EBENEN PANEL -->
<div class="a" style="left:882px;top:295px;width:59px;height:26px;background:#474747;border-radius:3px 3px 0 0"></div>
<div class="t" style="left:890px;top:301px;font-size:13.5px;color:#dcdcdc">Ebenen</div>
<div class="t" style="left:952px;top:301px;font-size:13.5px;color:#a9a9a9">Kanäle</div>
<div class="t" style="left:1010px;top:301px;font-size:13.5px;color:#a9a9a9">Pfade</div>
<div class="a" style="left:1128px;top:295px;width:18px;height:23px;background:#474747;border-radius:3px"></div>
<svg class="a" style="left:1128px;top:295px" width="18" height="23" viewBox="0 0 18 23"><g fill="#e0e0e0"><rect x="6" y="7.5" width="7" height="1.3"/><rect x="6" y="11" width="7" height="1.3"/><rect x="6" y="14.5" width="7" height="1.3"/></g></svg>
<div class="a" style="left:882px;top:320px;width:268px;height:658px;background:#474747"></div>
<div class="a" style="left:884px;top:325px;width:130px;height:26px;background:#262626;border-radius:3px"></div>
<div class="t" style="left:892px;top:332px;font-size:13.5px;color:#dcdcdc">Normal</div>
<svg class="a" style="left:999px;top:335px" width="10" height="7" viewBox="0 0 10 7"><path d="M1.2 1.2 L5 5 L8.8 1.2" fill="none" stroke="#dcdcdc" stroke-width="1.8"/></svg>
<div class="t" style="left:1021px;top:332px;font-size:13.5px;color:#dcdcdc">Deckkraft:</div>
<div class="a" style="left:1083px;top:325px;width:43px;height:26px;background:#262626;border-radius:3px"></div>
<div class="t" style="left:1088px;top:332px;font-size:13.5px;color:#dcdcdc;letter-spacing:-0.5px">100%</div>
<svg class="a" style="left:1128px;top:333px" width="11" height="11" viewBox="0 0 11 11"><path d="M1 1.5 H10 L5.5 10 Z" fill="#dcdcdc"/></svg>
<div class="t" style="left:884px;top:362px;font-size:13.5px;color:#dcdcdc">Fixieren:</div>
<svg class="a" style="left:941px;top:362px" width="14" height="14" viewBox="0 0 14 14"><rect x="0" y="0" width="14" height="14" fill="#d6d6d6"/><g fill="#333"><rect x="1.5" y="1.5" width="3.7" height="3.7"/><rect x="8.8" y="1.5" width="3.7" height="3.7"/><rect x="5.2" y="5.2" width="3.6" height="3.6"/><rect x="1.5" y="8.8" width="3.7" height="3.7"/><rect x="8.8" y="8.8" width="3.7" height="3.7"/></g></svg>
<svg class="a" style="left:961px;top:361px" width="15" height="17" viewBox="0 0 15 17"><path d="M10 1 L14 4 L9.5 9 L6.8 7 Z M6 7.5 L9.5 9.8 L8 13.5 L3.5 15.8 L0.8 16.2 L2.8 11 Z" fill="#d6d6d6"/></svg>
<svg class="a" style="left:979px;top:361px" width="15" height="16" viewBox="0 0 15 16"><path d="M7.5 0.5 L10 3 H8.3 V7.2 H12.5 V5.5 L15 8 L12.5 10.5 V8.8 H8.3 V13 H10 L7.5 15.5 L5 13 H6.7 V8.8 H2.5 V10.5 L0 8 L2.5 5.5 V7.2 H6.7 V3 H5 Z" fill="#d6d6d6"/></svg>
<svg class="a" style="left:998px;top:361px" width="15" height="17" viewBox="0 0 15 17"><path d="M3.8 8 V5.5 A3.7 3.7 0 0 1 11.2 5.5 V8" fill="none" stroke="#d6d6d6" stroke-width="2.2"/><rect x="1" y="8" width="13" height="8.5" rx="1" fill="#d6d6d6"/></svg>
<div class="t" style="left:1021px;top:362px;font-size:13.5px;color:#dcdcdc">Füllung:</div>
<div class="a" style="left:1070px;top:355px;width:43px;height:26px;background:#262626;border-radius:3px"></div>
<div class="t" style="left:1075px;top:362px;font-size:13.5px;color:#dcdcdc;letter-spacing:-0.5px">100%</div>
<svg class="a" style="left:1115px;top:363px" width="11" height="11" viewBox="0 0 11 11"><path d="M1 1.5 H10 L5.5 10 Z" fill="#dcdcdc"/></svg>
<div class="a" style="left:882px;top:385px;width:268px;height:1px;background:#2a2a2a"></div>
<!-- LAYERS -->
<div class="a" style="left:882px;top:427px;width:258px;height:1px;background:#2a2a2a"></div>
<svg class="a" style="left:888px;top:401px" width="16" height="12" viewBox="0 0 16 12"><path d="M1 6 Q8 -2 15 6 Q8 14 1 6 Z" fill="none" stroke="#d2d2d2" stroke-width="1.8"/><circle cx="8" cy="6" r="2.6" fill="#d2d2d2"/><circle cx="8.8" cy="5.2" r="0.9" fill="#474747"/></svg>
<div class="a" style="left:913px;top:389px;width:34px;height:34px;background:#000"></div>
<div class="a" style="left:914px;top:390px;width:32px;height:32px;background:conic-gradient(#cbcbcb 25%,#fff 0 50%,#cbcbcb 0 75%,#fff 0);background-size:8px 8px"></div>
<svg class="a" style="left:914px;top:390px" width="32" height="32" viewBox="0 0 32 32"><path d="M12 7 L24 6 L24 14 L12 16 Z" fill="#000"/><path d="M12 16 L24 14 L24 26 L12 27 Z" fill="#f5d41a"/><path d="M14 20 L22 18 L22 20 L14 22 Z" fill="#222"/><rect x="12" y="27" width="12" height="2" fill="#111"/><rect x="15" y="8" width="6" height="1.5" fill="#fff"/></svg>
<div class="a" style="left:935px;top:411px;width:10px;height:10px;background:#fff;border:1px solid #000"><div class="a" style="left:1px;top:1px;width:6px;height:6px;border:1px solid #000"></div></div>
<svg class="a" style="left:949px;top:399px" width="9" height="18" viewBox="0 0 9 18"><g fill="none" stroke="#d2d2d2" stroke-width="1.8"><rect x="1" y="1" width="7" height="7.5" rx="2.5"/><rect x="1" y="9.5" width="7" height="7.5" rx="2.5"/></g><rect x="3.6" y="5" width="1.8" height="8" fill="#d2d2d2"/></svg>
<div class="a" style="left:961px;top:389px;width:34px;height:34px;background:#000"></div>
<svg class="a" style="left:961px;top:389px" width="34" height="34" viewBox="0 0 34 34"><path d="M13 6 L25 5 L26 26 L17 27 L13 28 Z" fill="#fff"/></svg>
<div class="t" style="left:1005px;top:401px;font-size:13.5px;color:#dcdcdc;width:135px;height:18px;overflow:hidden;letter-spacing:-0.35px">FRONT-Design here</div>
<div class="a" style="left:882px;top:469px;width:258px;height:1px;background:#2a2a2a"></div>
<svg class="a" style="left:888px;top:443px" width="16" height="12" viewBox="0 0 16 12"><path d="M1 6 Q8 -2 15 6 Q8 14 1 6 Z" fill="none" stroke="#d2d2d2" stroke-width="1.8"/><circle cx="8" cy="6" r="2.6" fill="#d2d2d2"/><circle cx="8.8" cy="5.2" r="0.9" fill="#474747"/></svg>
<div class="a" style="left:913px;top:431px;width:34px;height:34px;background:#000"></div>
<div class="a" style="left:914px;top:432px;width:32px;height:32px;background:conic-gradient(#cbcbcb 25%,#fff 0 50%,#cbcbcb 0 75%,#fff 0);background-size:8px 8px"></div>
<div class="a" style="left:926px;top:440px;width:3px;height:22px;background:linear-gradient(90deg,#9a9a9a,#b4b4b4)"></div>
<div class="a" style="left:929px;top:438px;width:11px;height:23px;background:linear-gradient(180deg,#f0f0f0,#dcdcdc)"></div>
<div class="a" style="left:918px;top:456px;width:10px;height:7px;border-radius:50%;background:radial-gradient(#666 0,rgba(90,90,90,0) 70%)"></div>
<svg class="a" style="left:949px;top:441px" width="9" height="18" viewBox="0 0 9 18"><g fill="none" stroke="#d2d2d2" stroke-width="1.8"><rect x="1" y="1" width="7" height="7.5" rx="2.5"/><rect x="1" y="9.5" width="7" height="7.5" rx="2.5"/></g><rect x="3.6" y="5" width="1.8" height="8" fill="#d2d2d2"/></svg>
<div class="a" style="left:961px;top:431px;width:34px;height:34px;background:#000"></div>
<svg class="a" style="left:961px;top:431px" width="34" height="34" viewBox="0 0 34 34"><path d="M10.5 6 L13 6 L13 28 L11 27 Z" fill="#fff"/></svg>
<div class="t" style="left:1005px;top:443px;font-size:13.5px;color:#dcdcdc;width:135px;height:18px;overflow:hidden;letter-spacing:0">darkening-effect Sideb</div>
<div class="a" style="left:882px;top:470px;width:258px;height:41px;background:#5a5a5a"></div>
<div class="a" style="left:882px;top:511px;width:258px;height:1px;background:#2a2a2a"></div>
<svg class="a" style="left:888px;top:485px" width="16" height="12" viewBox="0 0 16 12"><path d="M1 6 Q8 -2 15 6 Q8 14 1 6 Z" fill="none" stroke="#d2d2d2" stroke-width="1.8"/><circle cx="8" cy="6" r="2.6" fill="#d2d2d2"/><circle cx="8.8" cy="5.2" r="0.9" fill="#474747"/></svg>
<div class="a" style="left:911px;top:471px;width:38px;height:38px;border:2px dashed #e8e8e8"></div>
<div class="a" style="left:913px;top:473px;width:34px;height:34px;background:#000"></div>
<div class="a" style="left:914px;top:474px;width:32px;height:32px;background:conic-gradient(#cbcbcb 25%,#fff 0 50%,#cbcbcb 0 75%,#fff 0);background-size:8px 8px"></div>
<div class="a" style="left:924px;top:480px;width:2px;height:22px;background:#111"></div><div class="a" style="left:926px;top:480px;width:1px;height:22px;background:#e8d44a"></div>
<div class="a" style="left:935px;top:495px;width:10px;height:10px;background:#fff;border:1px solid #000"><div class="a" style="left:1px;top:1px;width:6px;height:6px;border:1px solid #000"></div></div>
<svg class="a" style="left:949px;top:483px" width="9" height="18" viewBox="0 0 9 18"><g fill="none" stroke="#d2d2d2" stroke-width="1.8"><rect x="1" y="1" width="7" height="7.5" rx="2.5"/><rect x="1" y="9.5" width="7" height="7.5" rx="2.5"/></g><rect x="3.6" y="5" width="1.8" height="8" fill="#d2d2d2"/></svg>
<div class="a" style="left:961px;top:473px;width:34px;height:34px;background:#000"></div>
<svg class="a" style="left:961px;top:473px" width="34" height="34" viewBox="0 0 34 34"><path d="M10.5 6 L13 6 L13 28 L11 27 Z" fill="#fff"/></svg>
<div class="t" style="left:1005px;top:485px;font-size:13.5px;color:#dcdcdc;width:135px;height:18px;overflow:hidden;letter-spacing:-0.4px">SIDEBAR-Design here</div>
<div class="a" style="left:882px;top:553px;width:258px;height:1px;background:#2a2a2a"></div>
<div class="a" style="left:889px;top:526px;width:15px;height:15px;border:2px solid #555"></div>
<div class="a" style="left:913px;top:515px;width:34px;height:34px;background:#000"></div>
<div class="a" style="left:914px;top:516px;width:32px;height:32px;background:conic-gradient(#cbcbcb 25%,#fff 0 50%,#cbcbcb 0 75%,#fff 0);background-size:8px 8px"></div>
<div class="a" style="left:926px;top:524px;width:3px;height:22px;background:linear-gradient(90deg,#9a9a9a,#b4b4b4)"></div>
<div class="a" style="left:929px;top:522px;width:11px;height:23px;background:linear-gradient(180deg,#f0f0f0,#dcdcdc)"></div>
<div class="a" style="left:918px;top:540px;width:10px;height:7px;border-radius:50%;background:radial-gradient(#666 0,rgba(90,90,90,0) 70%)"></div>
<svg class="a" style="left:949px;top:525px" width="9" height="18" viewBox="0 0 9 18"><g fill="none" stroke="#d2d2d2" stroke-width="1.8"><rect x="1" y="1" width="7" height="7.5" rx="2.5"/><rect x="1" y="9.5" width="7" height="7.5" rx="2.5"/></g><rect x="3.6" y="5" width="1.8" height="8" fill="#d2d2d2"/></svg>
<div class="a" style="left:961px;top:515px;width:34px;height:34px;background:#000"></div>
<svg class="a" style="left:961px;top:515px" width="34" height="34" viewBox="0 0 34 34"><path d="M13 6 L25 5 L26 26 L17 27 L13 28 Z" fill="#fff"/></svg>
<div class="t" style="left:1005px;top:527px;font-size:13.5px;color:#dcdcdc;width:135px;height:18px;overflow:hidden;letter-spacing:0">Background Front</div>
<div class="a" style="left:882px;top:595px;width:258px;height:1px;background:#2a2a2a"></div>
<div class="a" style="left:889px;top:568px;width:15px;height:15px;border:2px solid #555"></div>
<div class="a" style="left:913px;top:557px;width:34px;height:34px;background:#000"></div>
<div class="a" style="left:914px;top:558px;width:32px;height:32px;background:conic-gradient(#cbcbcb 25%,#fff 0 50%,#cbcbcb 0 75%,#fff 0);background-size:8px 8px"></div>
<div class="a" style="left:926px;top:566px;width:3px;height:22px;background:linear-gradient(90deg,#9a9a9a,#b4b4b4)"></div>
<div class="a" style="left:929px;top:564px;width:11px;height:23px;background:linear-gradient(180deg,#f0f0f0,#dcdcdc)"></div>
<div class="a" style="left:918px;top:582px;width:10px;height:7px;border-radius:50%;background:radial-gradient(#666 0,rgba(90,90,90,0) 70%)"></div>
<svg class="a" style="left:949px;top:567px" width="9" height="18" viewBox="0 0 9 18"><g fill="none" stroke="#d2d2d2" stroke-width="1.8"><rect x="1" y="1" width="7" height="7.5" rx="2.5"/><rect x="1" y="9.5" width="7" height="7.5" rx="2.5"/></g><rect x="3.6" y="5" width="1.8" height="8" fill="#d2d2d2"/></svg>
<div class="a" style="left:961px;top:557px;width:34px;height:34px;background:#000"></div>
<svg class="a" style="left:961px;top:557px" width="34" height="34" viewBox="0 0 34 34"><path d="M10.5 6 L13 6 L13 28 L11 27 Z" fill="#fff"/></svg>
<div class="t" style="left:1005px;top:569px;font-size:13.5px;color:#dcdcdc;width:135px;height:18px;overflow:hidden;letter-spacing:0">Background Sidebar</div>
<svg class="a" style="left:888px;top:611px" width="16" height="12" viewBox="0 0 16 12"><path d="M1 6 Q8 -2 15 6 Q8 14 1 6 Z" fill="none" stroke="#d2d2d2" stroke-width="1.8"/><circle cx="8" cy="6" r="2.6" fill="#d2d2d2"/><circle cx="8.8" cy="5.2" r="0.9" fill="#474747"/></svg>
<div class="a" style="left:913px;top:599px;width:34px;height:34px;background:#000"></div>
<div class="a" style="left:914px;top:600px;width:32px;height:32px;background:conic-gradient(#cbcbcb 25%,#fff 0 50%,#cbcbcb 0 75%,#fff 0);background-size:8px 8px"></div>
<div class="a" style="left:926px;top:608px;width:3px;height:22px;background:linear-gradient(90deg,#9a9a9a,#b4b4b4)"></div>
<div class="a" style="left:929px;top:606px;width:11px;height:23px;background:linear-gradient(180deg,#f0f0f0,#dcdcdc)"></div>
<div class="a" style="left:918px;top:624px;width:10px;height:7px;border-radius:50%;background:radial-gradient(#666 0,rgba(90,90,90,0) 70%)"></div>
<div class="t" style="left:957px;top:611px;font-size:13.5px;color:#dcdcdc;width:183px;height:18px;overflow:hidden;letter-spacing:0">Background</div>
<!-- LAYERS BOTTOM -->
<div class="a" style="left:882px;top:948px;width:268px;height:1px;background:#2a2a2a"></div>
<div class="a" style="left:878px;top:105px;width:4px;height:873px;background:#222"></div>
<svg class="a" style="left:970px;top:952px" width="180" height="22" viewBox="970 952 180 22">
<g fill="none" stroke="#d2d2d2" stroke-width="1.8">
<rect x="975.5" y="959.5" width="7" height="6" rx="3"/><rect x="983" y="959.5" width="7" height="6" rx="3"/>
</g>
<rect x="980" y="961.8" width="5" height="1.6" fill="#d2d2d2"/>
<text x="998" y="969" font-family="Liberation Sans" font-size="15" fill="#d2d2d2" letter-spacing="-1.2">eff</text>
<path d="M1012 971 L1016 971 L1016 967 Z" fill="#d2d2d2"/>
<rect x="1025" y="956" width="15" height="12" fill="#d2d2d2"/><circle cx="1032.5" cy="962" r="3.3" fill="#474747"/>
<circle cx="1056" cy="963" r="6.8" fill="none" stroke="#d2d2d2" stroke-width="1.5"/><path d="M1056 956.2 A6.8 6.8 0 0 0 1056 969.8 Z" fill="#d2d2d2"/>
<path d="M1061 971 L1065 971 L1065 967 Z" fill="#d2d2d2"/>
<path d="M1075 957 L1081 957 L1083 959 L1090 959 L1090 969 L1075 969 Z" fill="#d2d2d2"/>
<path d="M1100.7 956.7 L1114.3 956.7 L1114.3 969.3 L1106 969.3 L1100.7 964 Z M1100.7 964 L1106 964 L1106 969.3" fill="none" stroke="#d2d2d2" stroke-width="1.3"/>
<path d="M1125 957.5 Q1132.5 954 1140 957.5 L1138 968 Q1132.5 971 1127 968 Z" fill="#d2d2d2"/>
<path d="M1125.5 957.5 Q1132.5 960.5 1139.5 957.5" fill="none" stroke="#474747" stroke-width="1"/>
</svg>
<!-- status -->
<div class="a" style="left:39px;top:960px;width:50px;height:18px;background:#080808"></div>
<div class="a" style="left:91px;top:960px;width:80px;height:18px;background:#080808"></div>
<div class="t mono" style="left:46px;top:966px;font-size:10px;line-height:10px;font-weight:bold;color:#eee">23.82%</div>
<div class="t mono" style="left:98px;top:966px;font-size:10px;line-height:10px;font-weight:bold;color:#eee">3000 × 3000</div>
<!-- FILE MENU -->
<div class="a" style="left:5px;top:61px;width:170px;height:501px;background:#fff"></div>
<div class="t mi" style="left:29px;top:70px">Neu...</div>
<div class="t ms" style="left:40px;width:121px;text-align:right;top:70px">Alt+Ctrl + N</div>
<div class="t mi" style="left:29px;top:101px">Öffnen...</div>
<div class="t ms" style="left:40px;width:121px;text-align:right;top:101px">Ctrl + O</div>
<div class="t mi" style="left:29px;top:132px">Öffnen &amp; Einfügen...</div>
<div class="t mi" style="left:29px;top:163px">Öffnen Mehr</div>
<svg class="a" style="left:155px;top:164px" width="7" height="11" viewBox="0 0 7 11"><path d="M1.2 1.2 L5.6 5.5 L1.2 9.8" fill="none" stroke="#444" stroke-width="1.3"/></svg>
<div class="a" style="left:5px;top:188px;width:170px;height:1px;background:#c6c6c6"></div>
<div class="t mi" style="left:29px;top:201px">Teilen</div>
<svg class="a" style="left:155px;top:202px" width="7" height="11" viewBox="0 0 7 11"><path d="M1.2 1.2 L5.6 5.5 L1.2 9.8" fill="none" stroke="#444" stroke-width="1.3"/></svg>
<div class="a" style="left:5px;top:227px;width:170px;height:1px;background:#c6c6c6"></div>
<div class="t mi" style="left:29px;top:240px">Speichern</div>
<div class="t ms" style="left:40px;width:121px;text-align:right;top:240px">Ctrl + S</div>
<div class="t mi" style="left:29px;top:271px">Speichern als PSD</div>
<div class="t mi" style="left:29px;top:302px">Speichern Mehr</div>
<svg class="a" style="left:155px;top:303px" width="7" height="11" viewBox="0 0 7 11"><path d="M1.2 1.2 L5.6 5.5 L1.2 9.8" fill="none" stroke="#444" stroke-width="1.3"/></svg>
<div class="t mi" style="left:29px;top:333px">Exportieren als</div>
<svg class="a" style="left:155px;top:334px" width="7" height="11" viewBox="0 0 7 11"><path d="M1.2 1.2 L5.6 5.5 L1.2 9.8" fill="none" stroke="#444" stroke-width="1.3"/></svg>
<div class="t mi" style="left:29px;top:364px">Drucken...</div>
<div class="a" style="left:5px;top:389px;width:170px;height:1px;background:#c6c6c6"></div>
<div class="t mi" style="left:29px;top:402px">Ebenen exportieren...</div>
<div class="t mi" style="left:29px;top:433px">Export Color Lookup...</div>
<div class="a" style="left:5px;top:459px;width:170px;height:1px;background:#c6c6c6"></div>
<div class="t mi" style="left:29px;top:472px">Dateiinformationen...</div>
<div class="a" style="left:5px;top:497px;width:170px;height:1px;background:#c6c6c6"></div>
<div class="t mi" style="left:29px;top:510px">Automatisieren</div>
<svg class="a" style="left:155px;top:511px" width="7" height="11" viewBox="0 0 7 11"><path d="M1.2 1.2 L5.6 5.5 L1.2 9.8" fill="none" stroke="#444" stroke-width="1.3"/></svg>
<div class="t mi" style="left:29px;top:541px">Skripten...</div>
<div class="a" style="left:13px;top:325px;width:157px;height:29px;border:3px solid #dc1414;border-radius:2px"></div>
<!-- SUBMENU -->
<div class="a" style="left:150px;top:323px;width:26px;height:239px;background:linear-gradient(90deg,rgba(0,0,0,0),rgba(0,0,0,0.14))"></div>
<div class="a" style="left:176px;top:323px;width:135px;height:247px;background:#fff;border-left:1px solid #b8b8b8"></div>
<div class="a" style="left:176px;top:323px;width:135px;height:31px;background:#c2e2fb"></div>
<div class="t mi" style="left:201px;top:333px">PNG</div>
<div class="t ms" style="left:230px;width:68px;text-align:right;top:333px">.png</div>
<div class="t mi" style="left:201px;top:364px">JPG</div>
<div class="t ms" style="left:230px;width:68px;text-align:right;top:364px">.jpg</div>
<div class="t mi" style="left:201px;top:395px">WEBP</div>
<div class="t ms" style="left:230px;width:68px;text-align:right;top:395px">.webp</div>
<div class="t mi" style="left:201px;top:426px">PDF</div>
<div class="t ms" style="left:230px;width:68px;text-align:right;top:426px">.pdf</div>
<div class="t mi" style="left:201px;top:457px">SVG</div>
<div class="t ms" style="left:230px;width:68px;text-align:right;top:457px">.svg</div>
<div class="t mi" style="left:201px;top:488px">GIF</div>
<div class="t ms" style="left:230px;width:68px;text-align:right;top:488px">.gif</div>
<div class="t mi" style="left:201px;top:519px">MP4</div>
<div class="t ms" style="left:230px;width:68px;text-align:right;top:519px">.mp4</div>
<div class="t mi" style="left:201px;top:550px">Mehr</div>
<svg class="a" style="left:291px;top:551px" width="7" height="11" viewBox="0 0 7 11"><path d="M1.2 1.2 L5.6 5.5 L1.2 9.8" fill="none" stroke="#444" stroke-width="1.3"/></svg>
<div class="a" style="left:188px;top:326px;width:116px;height:31px;border:3px solid #dc1414;border-radius:3px"></div>
</body></html>
